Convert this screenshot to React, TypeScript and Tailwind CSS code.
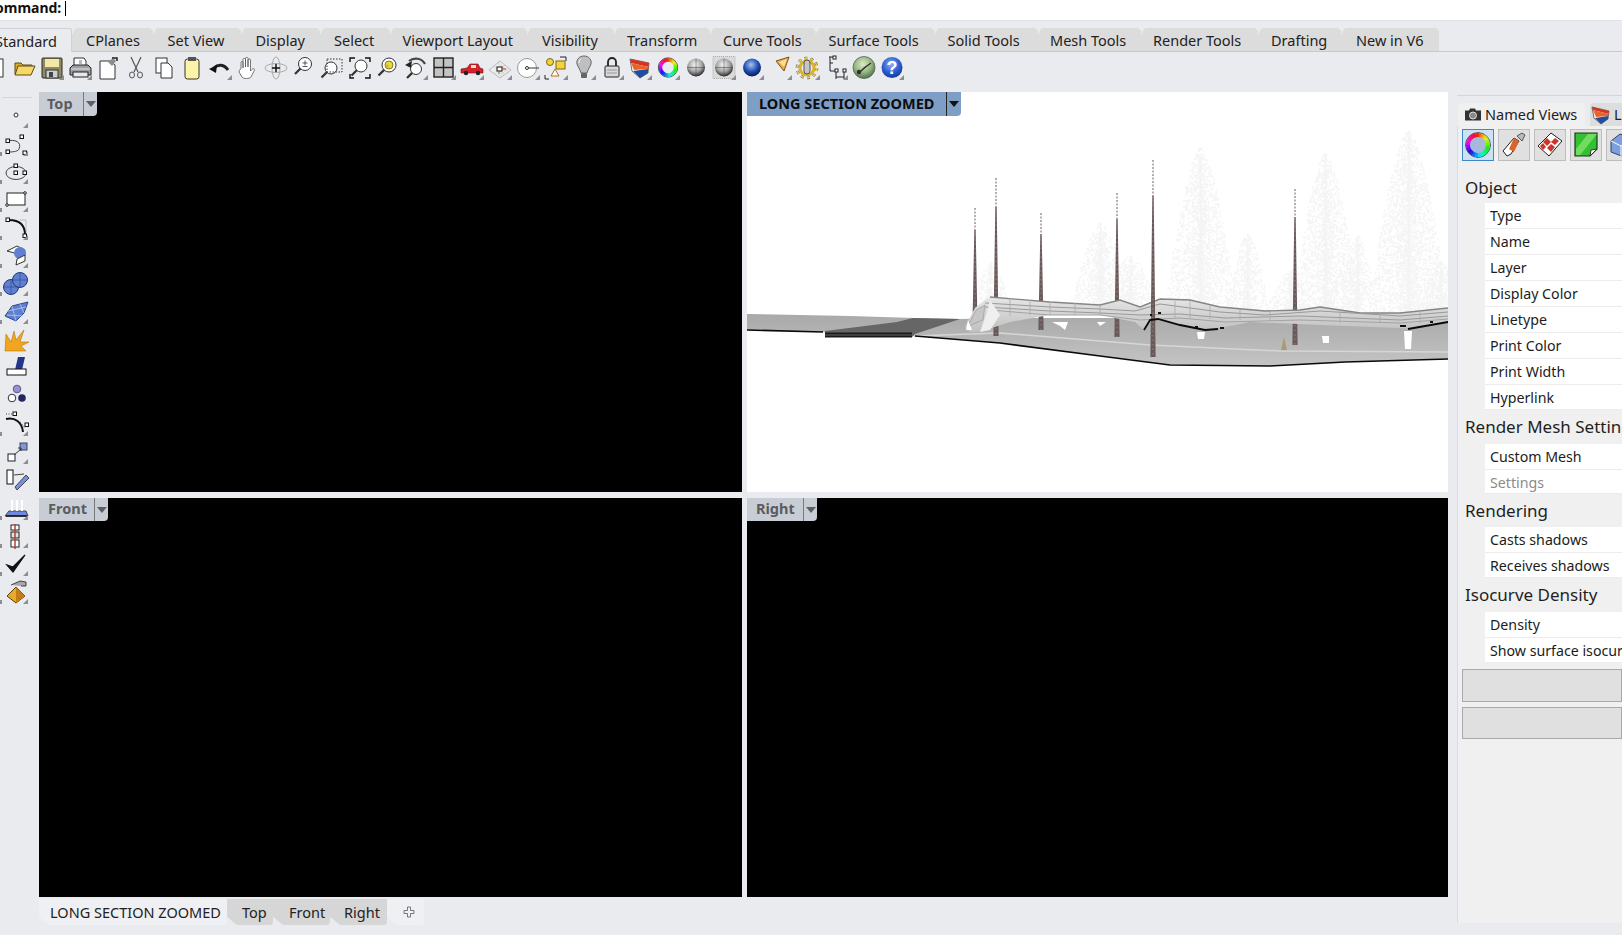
import React from "react";

const FONT = "font-['Noto_Sans','Open_Sans',sans-serif]";

type IcoProps = { children?: React.ReactNode; fly?: boolean };
function Ico({ children, fly = true }: IcoProps) {
  return (
    <svg viewBox="0 0 28 28" className="block w-[28px] h-[28px] shrink-0">
      {children}
      {fly && <path d="M26 21V26H21Z" fill="#8b8d90" />}
    </svg>
  );
}

function Wheel({ cx, cy, r, w }: { cx: number; cy: number; r: number; w: number }) {
  const segs = Array.from({ length: 24 }, (_, i) => {
    const a0 = (i / 24) * Math.PI * 2 - Math.PI / 2;
    const a1 = ((i + 1.2) / 24) * Math.PI * 2 - Math.PI / 2;
    return (
      <path
        key={i}
        d={`M${cx + r * Math.cos(a0)} ${cy + r * Math.sin(a0)}A${r} ${r} 0 0 1 ${cx + r * Math.cos(a1)} ${cy + r * Math.sin(a1)}`}
        stroke={`hsl(${(i * 15 + 20) % 360} 90% 50%)`}
        strokeWidth={w}
        fill="none"
      />
    );
  });
  return (
    <g>
      <circle cx={cx} cy={cy} r={r + w / 2 + 0.4} fill="none" stroke="#222" strokeWidth="0.8" />
      {segs}
    </g>
  );
}

function Glass({ x = 12, y = 11, r = 6 }: { x?: number; y?: number; r?: number }) {
  return (
    <g fill="none" stroke="#333">
      <circle cx={x} cy={y} r={r} strokeWidth="1" fill="#fff" />
      <path d={`M${x - r * 0.7} ${y + r * 0.7}L${x - r - 3.5} ${y + r + 3.5}`} strokeWidth="2.2" />
    </g>
  );
}

function Ball({ id, c0, c1, c2, r = 9 }: { id: string; c0: string; c1: string; c2: string; r?: number }) {
  return (
    <g>
      <defs>
        <radialGradient id={id} cx="0.45" cy="0.35" r="0.65">
          <stop offset="0" stopColor={c0} />
          <stop offset="0.6" stopColor={c1} />
          <stop offset="1" stopColor={c2} />
        </radialGradient>
      </defs>
      <circle cx="14" cy="13.5" r={r} fill={`url(#${id})`} />
    </g>
  );
}

const topIcons: React.ReactNode[] = [
  <Ico fly={false} key="new"><rect x="8" y="5" width="13" height="18" fill="#fff" stroke="#333" /></Ico>,
  <Ico fly={false} key="open">
    <path d="M5 20V9h6l2 2h9v3" fill="#d9a92c" stroke="#5f4a12" />
    <path d="M5 21l3-9h17l-4 9Z" fill="#f6d768" stroke="#5f4a12" />
  </Ico>,
  <Ico key="save">
    <rect x="4" y="4" width="20" height="20" rx="1" fill="#8f8a63" stroke="#2c2c22" />
    <rect x="7" y="5" width="14" height="8" fill="#f2e9a8" />
    <rect x="8" y="16" width="12" height="8" fill="#cfcfcf" stroke="#333" />
    <rect x="11" y="18" width="4" height="5" fill="#444" />
  </Ico>,
  <Ico key="print">
    <path d="M8 12V4h10l2 3v5" fill="#fff" stroke="#333" />
    <path d="M13 7h3M13 9h3" stroke="#777" />
    <path d="M4 14l3-3h15l3 3v7H4Z" fill="#9c9fa3" stroke="#222" />
    <rect x="7" y="18" width="15" height="5" fill="#e8e8e8" stroke="#222" />
    <path d="M5 15h19" stroke="#e2e2e2" />
  </Ico>,
  <Ico fly={false} key="page">
    <path d="M6 7h10l5 4v14H6Z" fill="#fff" stroke="#333" />
    <path d="M14 8l5-4 3 3-4 5Z" fill="#8d8d8d" />
    <path d="M18 4h5v3" fill="none" stroke="#222" strokeWidth="1.5" />
  </Ico>,
  <Ico fly={false} key="cut">
    <path d="M9 3l7 15M19 3l-7 15" stroke="#555" strokeWidth="1.2" />
    <ellipse cx="10" cy="21" rx="2.5" ry="3" fill="none" stroke="#555" />
    <ellipse cx="18" cy="21" rx="2.5" ry="3" fill="none" stroke="#555" />
  </Ico>,
  <Ico fly={false} key="copy">
    <rect x="6" y="4" width="11" height="15" fill="#fff" stroke="#333" />
    <path d="M11 9h7l4 4v11H11Z" fill="#fff" stroke="#333" />
  </Ico>,
  <Ico fly={false} key="paste">
    <rect x="7" y="5" width="14" height="20" rx="2.5" fill="#fbf4a6" stroke="#333" />
    <rect x="10" y="3" width="8" height="4" fill="#555" />
  </Ico>,
  <Ico key="undo">
    <path d="M8 14c4-4 10-4 14 2" fill="none" stroke="#222" strokeWidth="3" />
    <path d="M3 15l8-4-1 8Z" fill="#111" />
  </Ico>,
  <Ico fly={false} key="hand">
    <path d="M7 15V8.500c0-1.500 2-1.500 2 0V14V5.500c0-1.500 2.500-1.500 2.500 0V13V4.500c0-1.500 2.500-1.500 2.500 0V13V6c0-1.500 2.500-1.500 2.500 0v11c3-4 5-2 3.500 0l-3 6c-1 2-8 2-9 0l-3-5C5.500 16 6 15 7 15Z" fill="#fff" stroke="#555" strokeWidth="0.8" />
  </Ico>,
  <Ico fly={false} key="orbit">
    <ellipse cx="14" cy="14" rx="11" ry="4.500" fill="none" stroke="#aaa" />
    <ellipse cx="14" cy="14" rx="4" ry="11" fill="none" stroke="#aaa" />
    <path d="M14 10v8M10 14h8" stroke="#111" strokeWidth="1.500" />
  </Ico>,
  <Ico fly={false} key="zoom">
    <Glass x={15} y={10} r={6.5} />
    <path d="M12.500 9h5M15 6.500v5M12.500 12.500h5" stroke="#333" strokeWidth="0.8" />
  </Ico>,
  <Ico fly={false} key="zwin">
    <Glass x={13} y={14} r={6} />
    <rect x="9" y="5" width="15" height="13" fill="none" stroke="#333" strokeDasharray="1.500 1.500" />
  </Ico>,
  <Ico fly={false} key="zext">
    <Glass x={15} y={12} r={6} />
    <path d="M4 8V4h5M24 8V4h-5M24 20v4h-5M4 20v4h4" fill="none" stroke="#111" strokeWidth="1.400" />
  </Ico>,
  <Ico fly={false} key="zsel">
    <Glass x={15} y={11} r={7} />
    <circle cx="15" cy="11" r="4" fill="#e7d73e" stroke="#8b7c18" />
    <circle cx="13" cy="12" r="1.600" fill="#c9b426" />
  </Ico>,
  <Ico key="zund">
    <Glass x={14} y={15} r={5.500} />
    <path d="M7 7c5-4 13-3 16 3" fill="none" stroke="#444" strokeWidth="2.200" />
    <path d="M3 11l7-4-1 7Z" fill="#222" />
  </Ico>,
  <Ico key="grid">
    <rect x="4" y="4" width="19" height="19" fill="#c3c3c3" stroke="#222" strokeWidth="1.400" />
    <path d="M13.500 4v19M4 13.500h19" stroke="#222" strokeWidth="1.400" />
  </Ico>,
  <Ico key="car">
    <path d="M3 19v-4l6-1 3-4h8l2 4 3 1v4Z" fill="#d2232a" stroke="#7a1317" strokeWidth="0.6" />
    <rect x="13" y="11" width="5" height="3" fill="#ffd9c9" />
    <circle cx="8" cy="19" r="2.200" fill="#222" />
    <circle cx="20" cy="19" r="2.200" fill="#222" />
  </Ico>,
  <Ico key="cpl">
    <path d="M3 16L14 7l11 9-11 8Z" fill="#ececec" stroke="#bbb" />
    <path d="M8 12l11 9M12 9l11 9M19 11L8 20M23 14L12 23" stroke="#ccc" strokeWidth="0.7" />
    <rect x="11" y="13" width="5" height="4" fill="#fff" stroke="#111" />
    <path d="M16 15h4" stroke="#c32" />
    <path d="M13 17v3" stroke="#383" />
  </Ico>,
  <Ico key="circ">
    <circle cx="13" cy="14" r="9.500" fill="#fff" stroke="#999" />
    <path d="M13 14h12" stroke="#555" strokeWidth="1.200" />
    <circle cx="13" cy="14" r="1.500" fill="#fff" stroke="#333" />
  </Ico>,
  <Ico key="sel">
    <circle cx="8" cy="8" r="3.500" fill="#f2d33b" stroke="#7d6a10" />
    <rect x="14" y="7" width="9" height="8" fill="#f2d33b" stroke="#7d6a10" />
    <path d="M9 22l4-7 4 7Z" fill="#fff" stroke="#b86a2a" />
    <path d="M18 3h6v4M3 21v4h4" fill="none" stroke="#222" />
  </Ico>,
  <Ico key="bulb">
    <path d="M14 2c-5 0-8 4-7 8 1 3 3 5 4 9h6c1-4 3-6 4-9 1-4-2-8-7-8Z" fill="#bfbfbf" stroke="#666" />
    <path d="M11 5c-2 1-2 3-2 4" stroke="#eee" fill="none" />
    <rect x="11" y="19" width="6" height="5" rx="1" fill="#666" />
  </Ico>,
  <Ico key="lock">
    <path d="M10 12V8a4 4 0 0 1 8 0v4" fill="none" stroke="#222" strokeWidth="1.800" />
    <rect x="7" y="12" width="14" height="11" rx="1" fill="#d8d8d8" stroke="#222" />
    <path d="M9 16h10M9 19h10" stroke="#999" />
  </Ico>,
  <Ico key="lay">
    <path d="M4 5l19 4-1 10-8 5-8-7Z" fill="#fff" stroke="#333" strokeWidth="0.7" />
    <path d="M4 5l19 4-.5 4L5 9Z" fill="#d7331f" />
    <path d="M5 9l17.500 4-.5 2-14 1Z" fill="#e8642a" />
    <path d="M7 17l15-2v4l-8 5Z" fill="#214d9c" />
  </Ico>,
  <Ico key="whl"><Wheel cx={14} cy={13.500} r={7.500} w={3.500} /></Ico>,
  <Ico fly={false} key="ball">
    <Ball id="bg1" c0="#f6f6f6" c1="#a2a2a2" c2="#262626" />
    <path d="M14 4.500v18M5 13.500h18" stroke="#444" strokeWidth="0.5" />
  </Ico>,
  <Ico key="ball2">
    <rect x="3" y="2.500" width="22" height="22" fill="#dadada" stroke="#aaa" strokeDasharray="1 1" />
    <Ball id="bg2" c0="#f6f6f6" c1="#a2a2a2" c2="#262626" />
    <path d="M14 4.500v18M5 13.500h18" stroke="#444" strokeWidth="0.5" />
  </Ico>,
  <Ico key="ball3"><Ball id="bb1" c0="#a8c4f0" c1="#1f4db0" c2="#061a55" /></Ico>,
  <Ico key="fun">
    <path d="M10 7l13-4-5 14Z" fill="#f4a637" stroke="#7a5716" />
    <path d="M13 8l8-3-3 8Z" fill="#fbe0a4" />
  </Ico>,
  <Ico key="gear">
    <circle cx="13" cy="14" r="7" fill="none" stroke="#d7b230" strokeWidth="3" />
    <circle cx="13" cy="14" r="10" fill="none" stroke="#6d5a13" strokeWidth="2.600" strokeDasharray="3 3.300" />
    <circle cx="13" cy="14" r="10" fill="none" stroke="#f3d45a" strokeWidth="1.600" strokeDasharray="3 3.300" />
    <rect x="10" y="6" width="6" height="14" rx="3" fill="#c6c6c6" stroke="#555" />
  </Ico>,
  <Ico key="dim">
    <path d="M7 3h5M8 3v14h6M8 9h3" fill="none" stroke="#222" />
    <path d="M14 17v8M22 17v8M14 23h8" fill="none" stroke="#222" />
    <rect x="11" y="2" width="3" height="3" fill="#fff" stroke="#222" />
    <rect x="13" y="15" width="3" height="3" fill="#fff" stroke="#222" />
    <rect x="21" y="15" width="3" height="3" fill="#fff" stroke="#222" />
  </Ico>,
  <Ico fly={false} key="glb">
    <Ball id="gr1" c0="#dcecc8" c1="#93b57f" c2="#4f7350" r={11} />
    <circle cx="14" cy="13.500" r="11" fill="none" stroke="#556655" strokeWidth="0.800" />
    <path d="M8 20l6-6 7-5" stroke="#333" strokeWidth="1.200" />
    <circle cx="9" cy="18" r="2.200" fill="#333" />
  </Ico>,
  <Ico key="hlp">
    <Ball id="hp1" c0="#8fb0f2" c1="#2f5fd0" c2="#123a9c" r={10.500} />
    <text x="14" y="20" textAnchor="middle" fontSize="18" fontWeight="700" fill="#fff" fontFamily="Liberation Sans, sans-serif">?</text>
  </Ico>,
];

const blueSurf = "#5f7fd0";
const leftA: React.ReactNode[] = [
  <Ico key="pt"><circle cx="14" cy="13" r="2" fill="#fff" stroke="#333" /></Ico>,
  <Ico key="crv">
    <path d="M5 11c8-2 15 1 12 8-1 2-4 3-11 3" fill="none" stroke="#444" />
    <g fill="#fff" stroke="#111"><rect x="4" y="9" width="3.500" height="3.500" /><rect x="18" y="5" width="3.500" height="3.500" /><rect x="4" y="20" width="3.500" height="3.500" /><rect x="21" y="21" width="3.500" height="3.500" /></g>
  </Ico>,
  <Ico key="ell">
    <ellipse cx="14" cy="15" rx="10" ry="6.500" fill="none" stroke="#444" />
    <g fill="#fff" stroke="#111"><rect x="12" y="6" width="3.500" height="3.500" /><rect x="12" y="13" width="3.500" height="3.500" /><rect x="21" y="13" width="3.500" height="3.500" /></g>
  </Ico>,
  <Ico key="rct">
    <rect x="5" y="7" width="18" height="12" fill="#fff" stroke="#222" />
    <circle cx="5" cy="19" r="1.300" fill="#fff" stroke="#222" /><circle cx="23" cy="7" r="1.300" fill="#fff" stroke="#222" />
  </Ico>,
  <Ico key="fil">
    <path d="M18 6h6v15" fill="none" stroke="#bbb" />
    <path d="M7 6c10 0 16 4 16 15" fill="none" stroke="#111" strokeWidth="2" />
    <rect x="4" y="4" width="3.500" height="3.500" fill="#fff" stroke="#111" />
    <rect x="21" y="20" width="3.500" height="3.500" fill="#fff" stroke="#111" />
  </Ico>,
  <Ico key="srf">
    <path d="M5 9l10-5 8 4-3 5Z" fill="#fff" stroke="#333" />
    <circle cx="18" cy="11" r="6" fill={blueSurf} />
    <path d="M15 17l-1 6 9-4v-6Z" fill="#fff" stroke="#333" />
  </Ico>,
  <Ico key="sph">
    <circle cx="9" cy="17" r="7.500" fill={blueSurf} stroke="#223a7c" />
    <circle cx="18" cy="10" r="7.500" fill={blueSurf} stroke="#223a7c" />
    <path d="M18 3v14M11 10h14M9 10v14M2 17h14" stroke="#2d4591" strokeWidth="0.600" />
  </Ico>,
  <Ico key="msh">
    <path d="M3 18l7-10 16-4-4 11-8 8Z" fill={blueSurf} stroke="#2d4591" />
    <path d="M10 8l4 15M18 6l4 9M6 13l18-4M5 17l16 1" stroke="#c6d2ef" strokeWidth="0.700" />
  </Ico>,
  <Ico fly={false} key="exp">
    <path d="M3 25L4 8l5 8 3-11 2 9 8-10-4 12h9l-8 4 5 5Z" fill="#f2a61f" stroke="#a9650a" strokeWidth="0.500" />
  </Ico>,
  <Ico fly={false} key="ext">
    <path d="M16 3h7l-3 13h-7Z" fill="#23368e" />
    <rect x="5" y="15" width="19" height="6" fill="#fff" stroke="#111" />
  </Ico>,
];
const leftB: React.ReactNode[] = [
  <Ico fly={false} key="bln">
    <circle cx="15" cy="7" r="3.800" fill="#9a8fd0" stroke="#5a5a90" />
    <circle cx="10" cy="16" r="3.800" fill="#fff" stroke="#333" />
    <circle cx="20" cy="16" r="3.800" fill="#26265f" />
  </Ico>,
  <Ico key="rnd">
    <path d="M4 9c9-2 16 3 17 13" fill="none" stroke="#111" strokeWidth="2" />
    <path d="M4 4h6M18 12l5 6" stroke="#444" strokeDasharray="1 1.500" />
    <rect x="11" y="2" width="3.500" height="3.500" fill="#fff" stroke="#111" />
    <rect x="23" y="13" width="3.500" height="3.500" fill="#fff" stroke="#111" />
  </Ico>,
  <Ico key="scl">
    <rect x="6" y="16" width="7" height="7" fill="#fff" stroke="#222" />
    <rect x="18" y="5" width="7" height="7" fill="#8096d8" stroke="#445" />
    <path d="M12 17l7-6M16 10h3v3" fill="none" stroke="#333" />
  </Ico>,
  <Ico fly={false} key="rot">
    <rect x="5" y="4" width="6" height="14" fill="#fff" stroke="#111" />
    <path d="M12 9l10-1" stroke="#444" />
    <path d="M13 21l11-12 3 3-12 12Z" fill="#7a91d8" stroke="#445" />
  </Ico>,
  <Ico key="arr">
    <path d="M3 22l4-5h17l2 5Z" fill="#6d8ade" stroke="#445" />
    <path d="M10 6v11M15 6v11M20 6v11" stroke="#fff" strokeWidth="2" />
    <path d="M4 22h22" stroke="#111" strokeWidth="1.500" />
  </Ico>,
  <Ico key="his">
    <rect x="9" y="3" width="8" height="5" fill="#fff" stroke="#222" />
    <rect x="9" y="10" width="8" height="6" fill="#eadada" stroke="#222" />
    <rect x="9" y="18" width="8" height="7" fill="#fff" stroke="#222" />
    <path d="M13 2v25" stroke="#a8443f" strokeWidth="1.500" />
  </Ico>,
  <Ico key="chk">
    <path d="M5 15l6 7L23 5l-12 12Z" fill="#111" stroke="#111" strokeWidth="1.200" />
  </Ico>,
  <Ico key="pnt">
    <path d="M5 18l9-9 9 9-9 7Z" fill="#e9a92c" stroke="#5a3c08" />
    <path d="M14 9l9 9-9 7Z" fill="#c27d15" />
    <path d="M9 7l9-4 6 1v4h-5" fill="#a8a8a8" stroke="#222" strokeWidth="0.800" />
  </Ico>,
];

const tabs: [string, number, number][] = [
  ["CPlanes", 153, 86], ["Set View", 241, 167.5], ["Display", 320, 255.5], ["Select", 390, 334],
  ["Viewport Layout", 527, 402.5], ["Visibility", 614, 542], ["Transform", 710, 627],
  ["Curve Tools", 815.5, 723], ["Surface Tools", 934.5, 828.5], ["Solid Tools", 1038, 947.5],
  ["Mesh Tools", 1141, 1050], ["Render Tools", 1258, 1153], ["Drafting", 1341, 1271], ["New in V6", 1439, 1356],
];

function TabStrip() {
  let prev = 72;
  return (
    <div className="h-[24px] flex items-stretch border-b border-[#c6cad0] -ml-[8px]">
      <div className="w-[80px] shrink-0 bg-[#e9ebee] border-r border-t border-[#cfd2d6] rounded-tr-[3px] h-[24px] pl-[8px] text-[14.5px] leading-[24px] text-[#222] z-10 relative">
        <span className="-ml-[5px]">Standard</span>
      </div>
      {tabs.map(([t, end, tx]) => {
        const w = end - prev + 8;
        const pad = tx - (prev - 8);
        prev = end;
        return (
          <div
            key={t}
            style={{ width: w, marginLeft: -8, paddingLeft: pad }}
            className="shrink-0 h-[23px] bg-[#dcdcdd] [clip-path:polygon(0_100%,11px_1px,13px_0,calc(100%-3px)_0,100%_3px,100%_100%)] text-[14.5px] leading-[24px] text-[#222] whitespace-nowrap"
          >
            {t}
          </div>
        );
      })}
    </div>
  );
}

function rng(seed: number) {
  let s = seed;
  return () => {
    s = (s * 16807) % 2147483647;
    return s / 2147483647;
  };
}

function Tree({ x, top, bot, hw, seed }: { x: number; top: number; bot: number; hw: number; seed: number }) {
  const r = rng(seed);
  const n = Math.floor((bot - top) * hw * 0.45);
  const dots = Array.from({ length: n }, (_, i) => {
    const v = Math.pow(r(), 0.65);
    const wid = hw * Math.pow(v, 0.6);
    const u = r() * 2 - 1;
    const px = x + u * Math.abs(u) * wid;
    const py = top + v * (bot - top);
    return <rect key={i} x={px.toFixed(1)} y={py.toFixed(1)} width="1.500" height="1.500" />;
  });
  return <g fill="#f4f4f4">{dots}</g>;
}

function Pole({ x, top, bot }: { x: number; top: number; bot: number }) {
  const mid = top + (bot - top) * 0.18;
  return (
    <g>
      <path d={`M${x} ${top}V${mid}`} stroke="#6e5c5e" strokeWidth="1" strokeDasharray="2 1.500" />
      <path d={`M${x - 0.7} ${mid}L${x - 2.600} ${bot}H${x + 2.600}L${x + 0.7} ${mid}Z`} fill="#6a5959" />
      <path d={`M${x} ${mid}V${bot}`} stroke="#94858a" strokeWidth="1" strokeDasharray="1.500 3" />
    </g>
  );
}

function Section() {
  return (
    <svg viewBox="747 92 701 400" className="block w-full h-full">
      <defs>
        <linearGradient id="gnd" x1="0" y1="0" x2="0" y2="1">
          <stop offset="0" stopColor="#a9a9a9" />
          <stop offset="1" stopColor="#c4c4c4" />
        </linearGradient>
        <linearGradient id="brg" x1="0" y1="0" x2="0" y2="1">
          <stop offset="0" stopColor="#e6e6e6" />
          <stop offset="1" stopColor="#c0c0c0" />
        </linearGradient>
      </defs>
      <rect x="747" y="92" width="701" height="400" fill="#fff" />
      <Tree x={1200} top={147} bot={312} hw={36} seed={11} />
      <Tree x={1325} top={153} bot={312} hw={34} seed={23} />
      <Tree x={1408} top={130} bot={312} hw={40} seed={37} />
      <Tree x={1247} top={233} bot={312} hw={22} seed={41} />
      <Tree x={1357} top={235} bot={312} hw={20} seed={53} />
      <Tree x={1100} top={222} bot={312} hw={30} seed={67} />
      <Tree x={1130} top={255} bot={312} hw={30} seed={71} />
      <Tree x={990} top={262} bot={312} hw={22} seed={79} />
      <Tree x={1290} top={270} bot={312} hw={25} seed={83} />
      <Tree x={1440} top={260} bot={312} hw={22} seed={97} />
      <path d="M747 314L850 316L915 318L960 319L1000 318L1448 318V359L1345 362L1270 366L1170 365L1100 356L1000 343L915 336L823 332L747 330Z" fill="url(#gnd)" />
      <path d="M825 331L897 322L913 318L960 319L915 334L912 337H825Z" fill="#666" />
      <path d="M914 336L1000 333L1150 345L1280 351L1448 352" fill="none" stroke="#d6d6d6" strokeWidth="1.500" />
      <path d="M747 330L823 332M915 336L1000 343L1100 356L1170 365L1270 366L1345 362L1448 359" fill="none" stroke="#0a0a0a" strokeWidth="1.600" />
      <path d="M825 333.500H912M825 336.500H912" stroke="#1a1a1a" strokeWidth="1.800" />
      <Pole x={975} top={208} bot={330} />
      <Pole x={996} top={178} bot={336} />
      <Pole x={1041} top={213} bot={330} />
      <Pole x={1117} top={193} bot={337} />
      <Pole x={1295} top={189} bot={345} />
      <path d="M970 332L965 327L975 308L985 300L990 297L1050 302L1100 305L1120 300L1140 307L1150 302L1160 299L1190 300L1220 307L1265 311L1300 310L1320 307L1340 310L1360 313L1400 313L1448 308V322L1410 329L1400 328L1320 325L1250 322L1215 329L1205 330L1180 325L1158 319L1150 320L1144 330L1135 322L1100 315L1050 315L1010 322L980 332Z" fill="url(#brg)" />
      <path d="M990 297L1050 302L1100 305L1120 300L1140 307L1160 299L1190 300L1220 307L1265 311L1300 310L1320 307L1360 313L1400 313L1448 308" fill="none" stroke="#858585" strokeWidth="1.400" />
      <path d="M985 303L1050 307L1100 309L1135 311L1160 304L1220 312L1265 315L1320 311L1400 316L1448 312" fill="none" stroke="#999" strokeWidth="1" />
      <path d="M985 307L1050 311L1100 313L1140 315L1180 314L1225 318L1300 316L1400 320L1448 316" fill="none" stroke="#9a9a9a" strokeWidth="1" />
      <path d="M990 310L1050 315L1100 315L1140 320L1180 318L1225 322L1300 320L1400 323L1448 319" fill="none" stroke="#a3a3a3" strokeWidth="1" />
      <path d="M1010 298v18M1030 300v15M1050 302v13M1075 303v12M1100 305v10M1175 301v17M1190 301v18M1210 305v14M1240 309v11M1270 311v9M1340 310v13M1380 313v10M1420 311v12" stroke="#aaa" strokeWidth="0.800" />
      <path d="M968 326L976 310L985 305L983 320Z" fill="#c6c6c6" stroke="#888" strokeWidth="0.500" />
      <path d="M980 332L987 312L990 300L1000 315L990 330Z" fill="#efefef" />
      <path d="M1052 322H1068L1065 330L1060 326ZM1097 322H1106L1100 326ZM1197 332H1205L1204 339H1198ZM1322 336H1329V343H1323ZM1404 331H1412L1411 349H1405ZM968 320L972 330H966Z" fill="#fff" />
      <Pole x={1153} top={160} bot={357} />
      <path d="M1144 330L1150 320L1158 319L1180 325L1205 330L1218 329M1408 329L1448 322" fill="none" stroke="#0a0a0a" strokeWidth="1.800" />
      <path d="M1284 337L1287 350H1281Z" fill="#a99c72" />
      <path d="M1150 315h2M1158 313h3M1195 327h3M1220 328h4M1400 326h6M1430 322h3" stroke="#111" strokeWidth="2" />
    </svg>
  );
}

function VpLabel({ text, w, div, h, pad, active }: { text: string; w: number; div: number; h: number; pad: number; active?: boolean }) {
  return (
    <div
      style={{ width: w, height: h }}
      className={`absolute left-0 top-0 flex items-center font-bold text-[14.5px] rounded-br-[4px] ${active ? "bg-[#7f9ec6] text-[#0c0c0c]" : "bg-[#c8cdd5] text-[#5a5c60]"}`}
    >
      <span style={{ width: div, paddingLeft: pad }} className="whitespace-nowrap -mt-[1px]">{text}</span>
      <span className={`w-[1px] h-full ${active ? "bg-[#222]" : "bg-[#77797d]"}`} />
      <svg viewBox="0 0 12 8" className="w-[12px] h-[8px] ml-[1px]"><path d="M1 1H11L6 7Z" fill={active ? "#111" : "#5d5f63"} /></svg>
    </div>
  );
}

type Sec = { title: string; h: number; rows: [string, number, boolean?][] };
const secs: Sec[] = [
  { title: "Object", h: 30, rows: [["Type", 26], ["Name", 26], ["Layer", 26], ["Display Color", 26], ["Linetype", 26], ["Print Color", 26], ["Print Width", 26], ["Hyperlink", 25]] },
  { title: "Render Mesh Settings", h: 34, rows: [["Custom Mesh", 26], ["Settings", 24, true]] },
  { title: "Rendering", h: 33, rows: [["Casts shadows", 26], ["Receives shadows", 25]] },
  { title: "Isocurve Density", h: 34, rows: [["Density", 26], ["Show surface isocurves", 25]] },
];

function BtnIcon({ children, active }: { children: React.ReactNode; active?: boolean }) {
  return (
    <div className={`w-[32px] h-[32px] shrink-0 border flex items-center justify-center ${active ? "bg-[#cde1f5] border-[#3f88c8]" : "bg-[#e0e0e0] border-[#bdbdbd]"}`}>
      {children}
    </div>
  );
}

function Panel() {
  return (
    <div className="w-[174px] shrink-0 pl-[9px] flex flex-col overflow-hidden">
      <div className="h-[11px] shrink-0 flex items-start pt-[3px]"><div className="h-[1px] w-full bg-[#d2d5d9]" /></div>
      <div className="h-[23px] shrink-0 flex items-end pl-[1px] gap-[5px] text-[14.5px] text-[#222] whitespace-nowrap">
        <div className="w-[127px] shrink-0 h-[23px] bg-[#f0f0f0] rounded-t-[4px] flex items-center pl-[6px] gap-[3px]">
          <svg viewBox="0 0 18 14" className="w-[18px] h-[15px]">
            <path d="M1 3h4l1-2h5l1 2h5v10H1Z" fill="#333" />
            <circle cx="9" cy="8" r="3.500" fill="#888" stroke="#ddd" />
          </svg>
          <span>Named Views</span>
        </div>
        <div className="w-[60px] shrink-0 h-[23px] bg-[#dddddd] rounded-t-[4px] flex items-center pl-[1px] gap-[3px]">
          <svg viewBox="0 0 20 20" className="w-[20px] h-[20px]">
            <path d="M1 2l17 4-1 8-7 5-7-6Z" fill="#fff" stroke="#333" strokeWidth="0.700" />
            <path d="M1 2l17 4-.5 3L2 5Z" fill="#d7331f" />
            <path d="M2 5l15.500 4-.5 2-12 1Z" fill="#e8642a" />
            <path d="M4 13l13-2v3l-7 5Z" fill="#214d9c" />
          </svg>
          <span>L</span>
        </div>
      </div>
      <div className="flex-1 mb-[12px] pl-[4px] bg-[#eff0f2] border-l border-[#d9dcdf]">
        <div className="h-full bg-[#f0f0f0] flex flex-col">
          <div className="flex gap-[4px] pt-[3px] h-[47px] shrink-0">
            <BtnIcon active>
              <svg viewBox="0 0 28 28" className="w-[28px] h-[28px]"><circle cx="14" cy="14" r="9" fill="#a8b8dc" /><Wheel cx={14} cy={14} r={10} w={4} /></svg>
            </BtnIcon>
            <BtnIcon>
              <svg viewBox="0 0 28 28" className="w-[28px] h-[28px]">
                <path d="M3 20l4 5 4-2 8-13-5-3Z" fill="#fff" stroke="#222" />
                <path d="M9 18l5 3 5-11-5-3Z" fill="#d9652a" />
                <path d="M17 5l5-3 3 2-3 6Z" fill="#bbb" stroke="#555" />
              </svg>
            </BtnIcon>
            <BtnIcon>
              <svg viewBox="0 0 28 28" className="w-[28px] h-[28px]">
                <path d="M2 15L15 2l11 8-13 15Z" fill="#fff" stroke="#222" />
                <path d="M7 11l4-4 4 4-4 4ZM15 11l4-4 4 3-4 4ZM11 17l4-4 4 3-4 5Z" fill="#c9372c" />
                <path d="M4 15l3-3 3 4-3 3Z" fill="#c9372c" />
              </svg>
            </BtnIcon>
            <BtnIcon>
              <svg viewBox="0 0 28 28" className="w-[28px] h-[28px]">
                <path d="M3 2h22v16l-7 7H3Z" fill="#33c033" stroke="#143d14" strokeWidth="1.200" />
                <path d="M4 18L16 3h9L8 24H4Z" fill="#72dc60" />
                <path d="M18 25l1-6 6-1Z" fill="#fff" stroke="#333" />
              </svg>
            </BtnIcon>
            <BtnIcon>
              <svg viewBox="0 0 28 28" className="w-[28px] h-[28px]">
                <path d="M3 10l9-7 13 4v14l-9 5-13-5Z" fill="#7d9fe0" stroke="#345" />
                <path d="M3 10l10 5 12-8M13 15v11" fill="none" stroke="#fff" />
              </svg>
            </BtnIcon>
          </div>
          {secs.map((s) => (
            <div key={s.title}>
              <div style={{ height: s.h }} className="pl-[3px] flex items-center text-[17px] text-[#1f1f1f] whitespace-nowrap">{s.title}</div>
              {s.rows.map(([t, h, dim]) => (
                <div
                  key={t}
                  style={{ height: h }}
                  className={`ml-[23px] pl-[5px] bg-white border-b border-[#ececec] text-[14.2px] leading-[26px] whitespace-nowrap overflow-hidden ${dim ? "text-[#8c8c8c]" : "text-[#1c1c1c]"}`}
                >
                  {t}
                </div>
              ))}
            </div>
          ))}
          <div className="h-[6px] shrink-0" />
          <div className="h-[33px] shrink-0 bg-[#e0e0e0] border border-[#a9a9a9]" />
          <div className="h-[5px] shrink-0" />
          <div className="h-[32px] shrink-0 bg-[#e0e0e0] border border-[#a9a9a9]" />
        </div>
      </div>
    </div>
  );
}

const cutTab = "[clip-path:polygon(0_0,100%_0,100%_calc(100%-2px),calc(100%-2px)_100%,10px_100%,0_68%)]";

function LeftCell({ node, tick }: { node: React.ReactNode; tick: boolean }) {
  return (
    <div className="relative">
      {node}
      {tick && <span className="absolute -left-[1.500px] bottom-[2px] w-[1.500px] h-[4px] bg-[#8b8d90]" />}
    </div>
  );
}

export default function App() {
  return (
    <div className={`w-[1622px] h-[935px] overflow-hidden flex flex-col bg-[#e9ebee] ${FONT}`}>
      <div className="h-[20px] shrink-0 bg-white flex items-start -ml-[14px] text-[14px] leading-[16px] font-bold text-[#111] whitespace-nowrap">
        <span>Command:</span>
        <span className="ml-[4px] mt-[1px] w-[1px] h-[15px] bg-black" />
      </div>
      <div className="h-[8px] shrink-0 border-t border-[#e0e2e6]" />
      <TabStrip />
      <div className="h-[40px] shrink-0 flex items-start -ml-[18px] pt-[2px]">{topIcons}</div>
      <div className="flex-1 flex min-h-0">
        <div className="w-[39px] shrink-0 flex flex-col pl-[1.500px] pt-[9px]">
          <div className="h-[1px] w-[30px] bg-[#d2d5d9] -mt-[4px] mb-[4px]" />
          {leftA.map((n, i) => <LeftCell key={i} node={n} tick={i > 0 && i < 8} />)}
          {leftB.map((n, i) => <LeftCell key={i} node={n} tick={i === 1 || i >= 4} />)}
        </div>
        <div className="w-[1409px] shrink-0 flex flex-col">
          <div className="grid grid-cols-[703px_701px] grid-rows-[400px_399px] gap-x-[5px] gap-y-[6px] shrink-0">
            <div className="relative bg-black"><VpLabel text="Top" w={58} div={44} h={24} pad={8} /></div>
            <div className="relative bg-white">
              <Section />
              <VpLabel text="LONG SECTION ZOOMED" w={214} div={199} h={24} pad={12} active />
            </div>
            <div className="relative bg-black"><VpLabel text="Front" w={69} div={56} h={23} pad={9} /></div>
            <div className="relative bg-black"><VpLabel text="Right" w={70} div={56} h={23} pad={9} /></div>
          </div>
          <div className="flex items-stretch h-[26px] mt-[2px] text-[14.5px] text-[#222] leading-[26px] whitespace-nowrap">
            <div className={`w-[188px] bg-[#eef0f3] pl-[11px] ${cutTab}`}>LONG SECTION ZOOMED</div>
            <div className={`w-[46px] bg-[#d6d6d6] pl-[15px] ${cutTab}`}>Top</div>
            <div className={`w-[57px] bg-[#d6d6d6] pl-[16px] ${cutTab}`}>Front</div>
            <div className={`w-[57px] bg-[#d6d6d6] pl-[14px] ${cutTab}`}>Right</div>
            <div className={`w-[37px] flex items-center justify-center bg-[#eef0f3] pl-[6px] ${cutTab}`}>
              <svg viewBox="0 0 12 12" className="w-[12px] h-[12px]"><path d="M4.500 1h3v3.500H11v3H7.500V11h-3V7.500H1v-3h3.500Z" fill="none" stroke="#777" /></svg>
            </div>
          </div>
        </div>
        <Panel />
      </div>
    </div>
  );
}
